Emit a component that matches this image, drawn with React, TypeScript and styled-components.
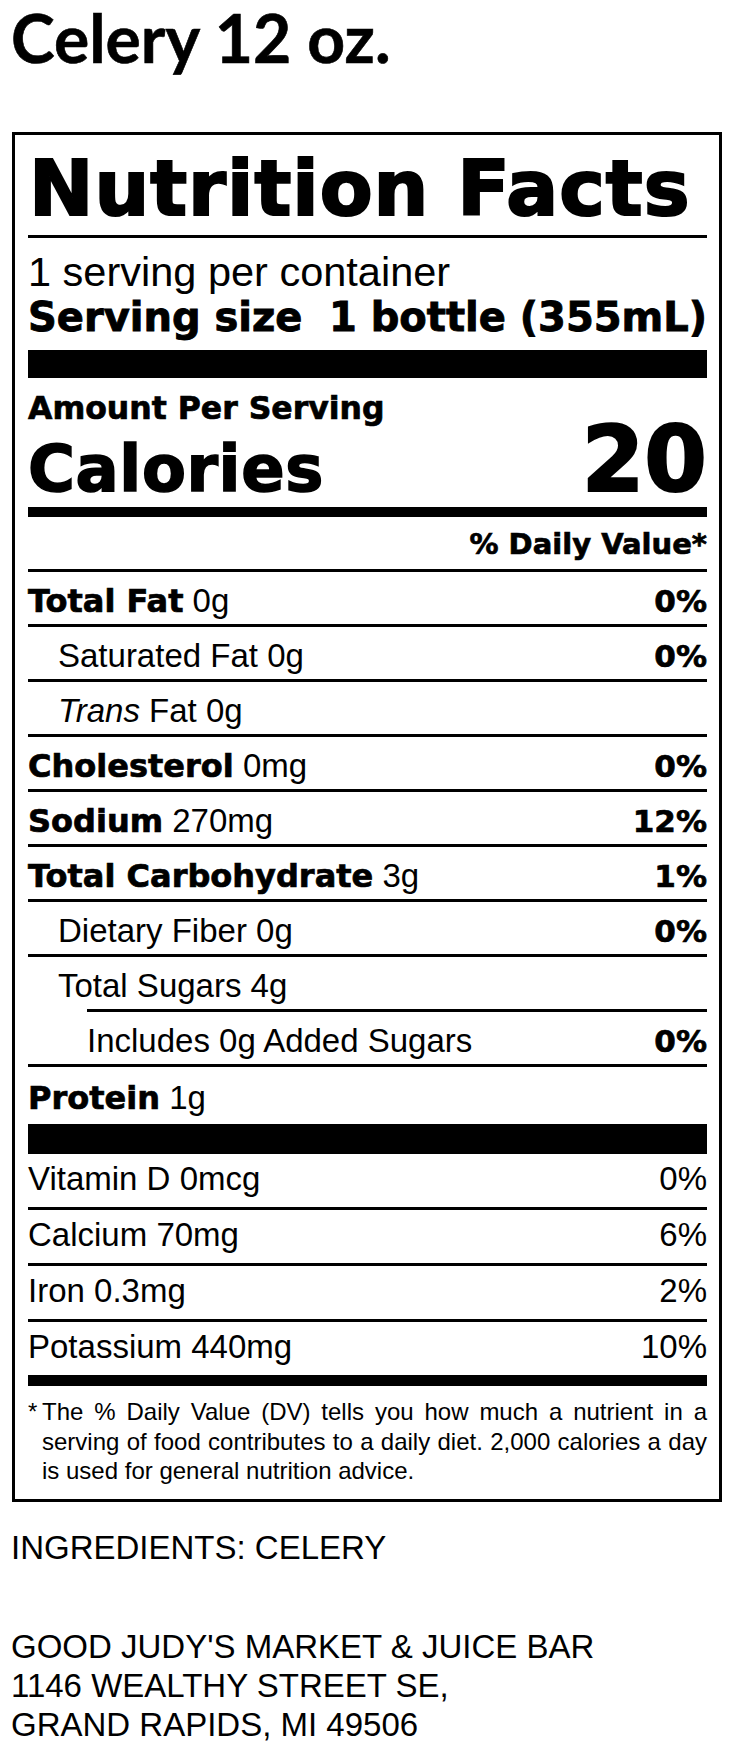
import React from "react";
import styled, { createGlobalStyle } from "styled-components";

const GlobalStyle = createGlobalStyle`
  html, body { margin: 0; padding: 0; background: #ffffff; }
  body { font-family: "Liberation Sans", Arial, sans-serif; color: #000000; }
  * { box-sizing: border-box; }
`;

const HEAVY = `"DejaVu Sans", "Liberation Sans", sans-serif`;

const Page = styled.main`
  width: 735px;
  padding: 5px 0 40px 11px;
`;

const ProductTitle = styled.h1`
  margin: 0;
  font-family: Lato, "Liberation Sans", sans-serif;
  font-weight: 700;
  font-size: 66px;
  line-height: 66px;
  -webkit-text-stroke: 0.6px #000;
`;

const Label = styled.section`
  margin: 61px 0 0 1px;
  width: 710px;
  border: 3px solid #000;
  padding: 0 12px 0 13px;
`;

const LabelTitle = styled.h2`
  margin: 0;
  padding: 17px 0 9px 1px;
  font-family: ${HEAVY};
  font-weight: 700;
  font-size: 77px;
  line-height: 74px;
  letter-spacing: 1px;
  -webkit-text-stroke: 2.2px #000;
  white-space: nowrap;
`;

const Rule = styled.div<{ $h: number }>`
  height: ${(p) => p.$h}px;
  background: #000;
`;

const ServingBlock = styled.div`
  padding: 12px 0 10px;
`;

const ServingCount = styled.div`
  font-size: 41.5px;
  line-height: 44px;
`;

const ServingSize = styled.div`
  display: flex;
  justify-content: space-between;
  font-family: ${HEAVY};
  font-weight: 700;
  font-size: 40px;
  line-height: 46px;
  -webkit-text-stroke: 0.9px #000;
  white-space: nowrap;
`;

const AmountBlock = styled.div`
  padding: 13px 0 3px;
`;

const AmountLabel = styled.div`
  font-family: ${HEAVY};
  font-weight: 700;
  font-size: 31.5px;
  line-height: 34px;
  -webkit-text-stroke: 0.7px #000;
`;

const CaloriesRow = styled.div`
  display: flex;
  justify-content: space-between;
  align-items: baseline;
  font-family: ${HEAVY};
  font-weight: 700;
  line-height: 70px;
`;

const CaloriesLabel = styled.span`
  font-size: 64px;
  letter-spacing: 0.6px;
  -webkit-text-stroke: 1.6px #000;
`;

const CaloriesValue = styled.span`
  font-size: 90px;
  -webkit-text-stroke: 2.2px #000;
`;

const DVHeader = styled.div`
  padding: 12px 0 10px;
  text-align: right;
  font-family: ${HEAVY};
  font-weight: 700;
  font-size: 29px;
  line-height: 30px;
  -webkit-text-stroke: 0.7px #000;
`;

const NutrientRow = styled.div<{ $indent?: number; $rule?: boolean; $pt?: number; $pb?: number }>`
  display: flex;
  justify-content: space-between;
  align-items: baseline;
  padding: ${(p) => p.$pt ?? 5}px 0 ${(p) => p.$pb ?? 0}px ${(p) => p.$indent ?? 0}px;
  font-size: 33px;
  line-height: 47px;
  border-bottom: ${(p) => (p.$rule === false ? "none" : "3px solid #000")};
  white-space: nowrap;
`;

const SubGroup = styled.div`
  border-bottom: 3px solid #000;
`;

const SubRow = styled(NutrientRow)`
  margin-left: 59px;
  border-top: 3px solid #000;
`;

const NutrientName = styled.span`
  font-family: ${HEAVY};
  font-weight: 700;
  font-size: 32px;
  line-height: 1;
  -webkit-text-stroke: 0.7px #000;
`;

const Italic = styled.em`
  font-style: italic;
`;

const Percent = styled.span`
  font-family: ${HEAVY};
  font-weight: 700;
  font-size: 31px;
  line-height: 1;
  -webkit-text-stroke: 0.7px #000;
`;

const VitaminRow = styled.div<{ $last?: boolean }>`
  display: flex;
  justify-content: space-between;
  align-items: baseline;
  padding-bottom: 3px;
  font-size: 33px;
  line-height: 50px;
  border-bottom: ${(p) => (p.$last ? "none" : "3px solid #000")};
`;

const Footnote = styled.div`
  display: flex;
  padding: 11px 0 13px;
  font-size: 24px;
  line-height: 29.5px;
`;

const Asterisk = styled.span`
  flex: 0 0 14px;
`;

const FootText = styled.p`
  margin: 0;
  flex: 1;
  text-align: justify;
`;

const Ingredients = styled.p`
  margin: 27px 0 0;
  font-size: 33px;
  line-height: 38px;
`;

const Address = styled.p`
  margin: 60px 0 0;
  font-size: 33px;
  line-height: 39px;
`;

type Nutrient = {
  name: React.ReactNode;
  amount: string;
  dv?: string;
  bold?: boolean;
  indent?: number;
};

const mainRows: Nutrient[] = [
  { name: "Total Fat", amount: "0g", dv: "0%", bold: true },
  { name: "Saturated Fat", amount: "0g", dv: "0%", indent: 30 },
  { name: <><Italic>Trans</Italic> Fat</>, amount: "0g", indent: 30 },
  { name: "Cholesterol", amount: "0mg", dv: "0%", bold: true },
  { name: "Sodium", amount: "270mg", dv: "12%", bold: true },
  { name: "Total Carbohydrate", amount: "3g", dv: "1%", bold: true },
  { name: "Dietary Fiber", amount: "0g", dv: "0%", indent: 30 },
];

const vitamins = [
  { name: "Vitamin D", amount: "0mcg", dv: "0%" },
  { name: "Calcium", amount: "70mg", dv: "6%" },
  { name: "Iron", amount: "0.3mg", dv: "2%" },
  { name: "Potassium", amount: "440mg", dv: "10%" },
];

const NutrientText: React.FC<{ n: Nutrient }> = ({ n }) => (
  <span>
    {n.bold ? <NutrientName>{n.name}</NutrientName> : n.name} {n.amount}
  </span>
);

export default function App() {
  return (
    <>
      <GlobalStyle />
      <Page>
        <ProductTitle>Celery 12 oz.</ProductTitle>
        <Label>
          <LabelTitle>Nutrition Facts</LabelTitle>
          <Rule $h={3} />
          <ServingBlock>
            <ServingCount>1 serving per container</ServingCount>
            <ServingSize>
              <span>Serving size</span>
              <span>1 bottle (355mL)</span>
            </ServingSize>
          </ServingBlock>
          <Rule $h={28} />
          <AmountBlock>
            <AmountLabel>Amount Per Serving</AmountLabel>
            <CaloriesRow>
              <CaloriesLabel>Calories</CaloriesLabel>
              <CaloriesValue>20</CaloriesValue>
            </CaloriesRow>
          </AmountBlock>
          <Rule $h={10} />
          <DVHeader>% Daily Value*</DVHeader>
          <Rule $h={3} />
          {mainRows.map((n, i) => (
            <NutrientRow key={i} $indent={n.indent}>
              <NutrientText n={n} />
              {n.dv && <Percent>{n.dv}</Percent>}
            </NutrientRow>
          ))}
          <SubGroup>
            <NutrientRow $indent={30} $rule={false}>
              <span>Total Sugars 4g</span>
            </NutrientRow>
            <SubRow $rule={false}>
              <span>Includes 0g Added Sugars</span>
              <Percent>0%</Percent>
            </SubRow>
          </SubGroup>
          <NutrientRow $rule={false} $pt={7} $pb={3}>
            <NutrientText n={{ name: "Protein", amount: "1g", bold: true }} />
          </NutrientRow>
          <Rule $h={30} />
          {vitamins.map((v, i) => (
            <VitaminRow key={v.name} $last={i === vitamins.length - 1}>
              <span>
                {v.name} {v.amount}
              </span>
              <span>{v.dv}</span>
            </VitaminRow>
          ))}
          <Rule $h={11} />
          <Footnote>
            <Asterisk>*</Asterisk>
            <FootText>
              The % Daily Value (DV) tells you how much a nutrient in a serving of food contributes to a daily
              diet. 2,000 calories a day is used for general nutrition advice.
            </FootText>
          </Footnote>
        </Label>
        <Ingredients>INGREDIENTS: CELERY</Ingredients>
        <Address>
          GOOD JUDY'S MARKET &amp; JUICE BAR
          <br />
          1146 WEALTHY STREET SE,
          <br />
          GRAND RAPIDS, MI 49506
        </Address>
      </Page>
    </>
  );
}
